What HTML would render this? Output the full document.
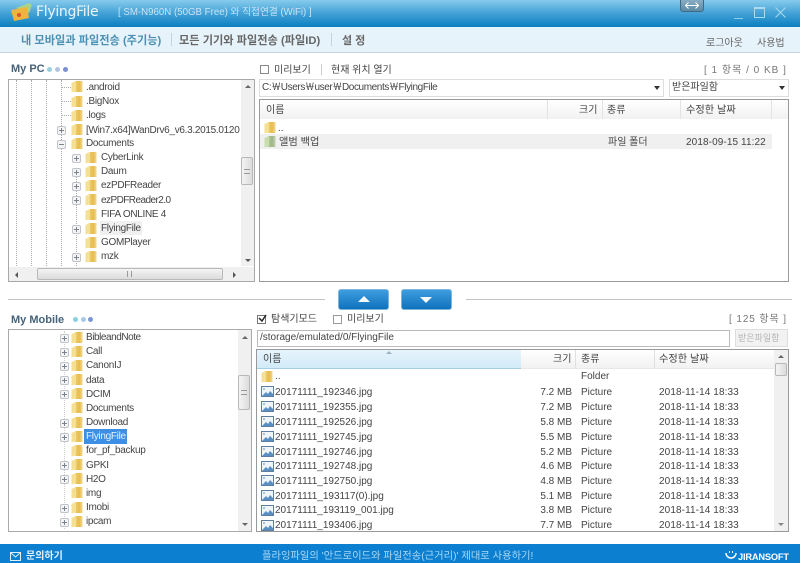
<!DOCTYPE html>
<html lang="ko"><head><meta charset="utf-8"><title>FlyingFile</title>
<style>
html,body{margin:0;padding:0;background:#fff}
#p{position:relative;width:800px;height:563px;overflow:hidden;background:#fff;font-family:"Liberation Sans","Noto Sans CJK KR",sans-serif;font-size:10px;color:#444;filter:blur(.3px)}
#p div,#p span,#p svg{position:absolute}
#p span{white-space:nowrap;line-height:14px;margin-top:1px}
.b{border:1px solid #a9a9a9;box-sizing:border-box;background:#fff}
.sb{background:#f0f0f0}
.th{border:1px solid #b8b8b8;box-sizing:border-box;border-radius:2px;background:linear-gradient(90deg,#f4f4f4,#dcdcdc)}
.d{width:5px;height:5px;border-radius:50%}
.arr{width:0;height:0}
.r{text-align:right}
#p span.t{letter-spacing:-.3px}
</style></head><body>
<div id="p">
<svg width="0" height="0" style="left:0;top:0"><defs>
<linearGradient id="fg" x1="0" x2="1" y1="0" y2="0"><stop offset="0" stop-color="#f0cf6c"/><stop offset=".55" stop-color="#e6bb52"/><stop offset="1" stop-color="#f3d98c"/></linearGradient>
<linearGradient id="gg" x1="0" x2="1" y1="0" y2="0"><stop offset="0" stop-color="#b4cc98"/><stop offset=".55" stop-color="#9fb587"/><stop offset="1" stop-color="#c4d2b0"/></linearGradient>
<symbol id="f" viewBox="0 0 12 13"><path d="M4 1h7.500v11H4z" fill="url(#fg)"/><path d="M.5 3L5 1v10l-4.500 1.500z" fill="#f5df92"/></symbol>
<symbol id="g" viewBox="0 0 12 13"><path d="M4 1h7.500v11H4z" fill="url(#gg)"/><path d="M.5 3L5 1v10l-4.500 1.500z" fill="#c8dcae"/></symbol>
<symbol id="pic" viewBox="0 0 13 11"><rect x=".5" y=".5" width="12" height="10" fill="#f0f5fa" stroke="#5f7da0"/><path d="M1 10l4-4 2 2 2-3 3 3v2z" fill="#5a8fc4"/><rect x="2" y="2" width="2" height="2" fill="#a8c4de"/></symbol>
<symbol id="plus" viewBox="0 0 9 9"><rect x=".5" y=".5" width="8" height="8" rx="1.500" fill="#f4f4f4" stroke="#c0c4c8"/><path d="M2 4.500h5M4.500 2v5" stroke="#7a848e"/></symbol>
<symbol id="minus" viewBox="0 0 9 9"><rect x=".5" y=".5" width="8" height="8" rx="1.500" fill="#f4f4f4" stroke="#c0c4c8"/><path d="M2 4.500h5" stroke="#7a848e"/></symbol>
</defs></svg>

<!-- Title bar -->
<div style="left:0;top:0;width:800px;height:27px;background:linear-gradient(#86cbec,#49a5d8 45%,#1384c4 92%,#0f7db9)"></div>
<svg style="left:10px;top:2px" width="23" height="20" viewBox="0 0 23 20"><path d="M6 6L19 1l3 2-3 8z" fill="#a8d48a"/><path d="M1 8l16-3 2 11-15 3z" fill="#eeb53e"/><circle cx="9" cy="13" r="2" fill="#d9552a"/></svg>
<span style="left:36px;top:3px;font-size:14px;color:#e9f6fc;line-height:17px;font-family:'DejaVu Sans','Liberation Sans',sans-serif;letter-spacing:-.3px">FlyingFile</span>
<span style="left:118px;top:5px;font-size:9.700px;color:#c6e5f4">[ SM-N960N (50GB Free) 와 직접연결 (WiFi) ]</span>
<div style="left:680px;top:-3px;width:24px;height:15px;background:linear-gradient(#8fb3c8,#5d8aa5);border:1px solid #3e6a85;border-radius:3px;box-sizing:border-box"></div>
<svg style="left:685px;top:2px" width="14" height="7"><path d="M.5 3.500h13M3.500 .5l-3 3 3 3M10.500 .5l3 3-3 3" stroke="#fff" fill="none"/></svg>
<div style="left:734px;top:18px;width:9px;height:1px;background:#8fcdea"></div>
<div style="left:754px;top:7px;width:11px;height:11px;border:1px solid #a8dcf2;border-top-width:2px;box-sizing:border-box"></div>
<svg style="left:775px;top:7px" width="11" height="11"><path d="M.5.5l10 10M10.500.5l-10 10" stroke="#a8dcf2" stroke-width="1"/></svg>

<!-- Nav -->
<div style="left:0;top:27px;width:800px;height:25px;background:#e7f3fa;border-bottom:1px solid #c4d3dc"></div>
<span style="left:21px;top:33px;font-size:11.200px;font-weight:bold;color:#4a90b4">내 모바일과 파일전송 (주기능)</span>
<div style="left:171px;top:33px;width:1px;height:13px;background:#c5d3db"></div>
<span style="left:179px;top:33px;font-size:11.200px;font-weight:bold;color:#666">모든 기기와 파일전송 (파일ID)</span>
<div style="left:331px;top:33px;width:1px;height:13px;background:#c5d3db"></div>
<span style="left:342px;top:33px;font-size:11px;font-weight:bold;color:#666">설 정</span>
<span style="left:706px;top:36px;color:#666">로그아웃</span>
<span style="left:757px;top:36px;color:#666">사용법</span>

<!-- My PC -->
<span style="left:11px;top:61px;font-size:11px;font-weight:bold;color:#45637a">My PC</span>
<div class="d" style="left:47px;top:67px;background:#9bd0dd"></div><div class="d" style="left:55px;top:67px;background:#b4c4e0"></div><div class="d" style="left:63px;top:67px;background:#7c8fd0"></div>

<div class="b" style="left:8px;top:79px;width:247px;height:203px;overflow:hidden"></div>
<div style="left:16px;top:80px;width:1px;height:186px;border-left:1px dotted #aaa"></div>
<div style="left:31px;top:80px;width:1px;height:186px;border-left:1px dotted #aaa"></div>
<div style="left:46px;top:80px;width:1px;height:186px;border-left:1px dotted #aaa"></div>
<div style="left:61px;top:80px;width:1px;height:186px;border-left:1px dotted #aaa"></div>
<div style="left:76px;top:172px;width:1px;height:94px;border-left:1px dotted #aaa"></div>
<div style="left:62px;top:87px;width:9px;border-top:1px dotted #aaa"></div>
<div style="left:62px;top:101px;width:9px;border-top:1px dotted #aaa"></div>
<div style="left:62px;top:115px;width:9px;border-top:1px dotted #aaa"></div>
<svg style="left:71px;top:80px" width="12" height="13"><use href="#f"/></svg><span class="t" style="left:86px;top:80px">.android</span>
<svg style="left:71px;top:95px" width="12" height="13"><use href="#f"/></svg><span class="t" style="left:86px;top:94px">.BigNox</span>
<svg style="left:71px;top:109px" width="12" height="13"><use href="#f"/></svg><span class="t" style="left:86px;top:108px">.logs</span>
<svg style="left:57px;top:126px" width="9" height="9"><use href="#plus"/></svg><svg style="left:71px;top:123px" width="12" height="13"><use href="#f"/></svg><span class="t" style="left:86px;top:123px;width:155px;overflow:hidden">[Win7.x64]WanDrv6_v6.3.2015.0120</span>
<svg style="left:57px;top:140px" width="9" height="9"><use href="#minus"/></svg><svg style="left:71px;top:137px" width="12" height="13"><use href="#f"/></svg><span class="t" style="left:86px;top:136px">Documents</span>
<svg style="left:72px;top:154px" width="9" height="9"><use href="#plus"/></svg><svg style="left:85px;top:151px" width="12" height="13"><use href="#f"/></svg><span class="t" style="left:101px;top:150px">CyberLink</span>
<svg style="left:72px;top:168px" width="9" height="9"><use href="#plus"/></svg><svg style="left:85px;top:165px" width="12" height="13"><use href="#f"/></svg><span class="t" style="left:101px;top:164px">Daum</span>
<svg style="left:72px;top:182px" width="9" height="9"><use href="#plus"/></svg><svg style="left:85px;top:179px" width="12" height="13"><use href="#f"/></svg><span class="t" style="left:101px;top:178px">ezPDFReader</span>
<svg style="left:72px;top:196px" width="9" height="9"><use href="#plus"/></svg><svg style="left:85px;top:193px" width="12" height="13"><use href="#f"/></svg><span class="t" style="left:101px;top:193px;letter-spacing:-.55px">ezPDFReader2.0</span>
<svg style="left:85px;top:208px" width="12" height="13"><use href="#f"/></svg><span class="t" style="left:101px;top:207px">FIFA ONLINE 4</span>
<div style="left:100px;top:221px;width:42px;height:14px;background:#f0f0f0"></div>
<svg style="left:72px;top:225px" width="9" height="9"><use href="#plus"/></svg><svg style="left:85px;top:222px" width="12" height="13"><use href="#f"/></svg><span class="t" style="left:101px;top:221px">FlyingFile</span>
<svg style="left:85px;top:236px" width="12" height="13"><use href="#f"/></svg><span class="t" style="left:101px;top:235px">GOMPlayer</span>
<svg style="left:72px;top:253px" width="9" height="9"><use href="#plus"/></svg><svg style="left:85px;top:250px" width="12" height="13"><use href="#f"/></svg><span class="t" style="left:101px;top:249px">mzk</span>
<div class="sb" style="left:241px;top:80px;width:13px;height:186px"></div>
<div class="th" style="left:241px;top:157px;width:12px;height:28px"></div>
<div style="left:244px;top:169px;width:6px;height:5px;border-top:1px solid #999;border-bottom:1px solid #999;box-sizing:border-box"></div>
<div class="arr" style="left:245px;top:85px;border:3px solid transparent;border-bottom-color:#666;border-top:0"></div>
<div class="arr" style="left:245px;top:259px;border:3px solid transparent;border-top-color:#555;border-bottom:0"></div>
<div class="sb" style="left:9px;top:267px;width:245px;height:14px"></div>
<div class="th" style="left:37px;top:268px;width:186px;height:12px;background:linear-gradient(#f4f4f4,#dcdcdc)"></div>
<div style="left:127px;top:271px;width:5px;height:6px;border-left:1px solid #999;border-right:1px solid #999;box-sizing:border-box"></div>
<div class="arr" style="left:15px;top:272px;border:3px solid transparent;border-right-color:#555;border-left:0"></div>
<div class="arr" style="left:233px;top:272px;border:3px solid transparent;border-left-color:#555;border-right:0"></div>

<!-- PC right -->
<div class="b" style="left:260px;top:65px;width:9px;height:9px;border-color:#888"></div>
<span style="left:274px;top:63px">미리보기</span>
<div style="left:321px;top:64px;width:1px;height:11px;background:#ccc"></div>
<span style="left:331px;top:63px">현재 위치 열기</span>
<span style="left:704px;top:63px;color:#777;letter-spacing:1px">[ 1 항목 / 0 KB ]</span>
<div class="b" style="left:259px;top:79px;width:405px;height:18px;border-color:#ddd"></div>
<span style="left:262px;top:80px;letter-spacing:-.4px">C:￦Users￦user￦Documents￦FlyingFile</span>
<div class="arr" style="left:654px;top:86px;border:3px solid transparent;border-top:4px solid #333;border-bottom:0"></div>
<div class="b" style="left:669px;top:79px;width:120px;height:18px;border-color:#ddd"></div>
<span style="left:672px;top:80px">받은파일함</span>
<div class="arr" style="left:779px;top:86px;border:3px solid transparent;border-top:4px solid #333;border-bottom:0"></div>

<div class="b" style="left:259px;top:99px;width:530px;height:183px;border-color:#999"></div>
<div style="left:260px;top:100px;width:528px;height:19px;background:linear-gradient(#fff,#f1f1f1)"></div>
<div style="left:547px;top:100px;width:1px;height:19px;background:#e3e3e3"></div>
<div style="left:602px;top:100px;width:1px;height:19px;background:#e3e3e3"></div>
<div style="left:680px;top:100px;width:1px;height:19px;background:#e3e3e3"></div>
<div style="left:771px;top:100px;width:1px;height:19px;background:#e3e3e3"></div>
<span style="left:266px;top:103px">이름</span>
<span style="left:579px;top:103px">크기</span>
<span style="left:607px;top:103px">종류</span>
<span style="left:686px;top:103px;font-size:10.200px">수정한 날짜</span>
<svg style="left:264px;top:121px" width="12" height="13"><use href="#f"/></svg><span style="left:278px;top:121px">..</span>
<div style="left:260px;top:134px;width:512px;height:15px;background:#f0f0f0"></div>
<svg style="left:264px;top:135px" width="12" height="13"><use href="#g"/></svg>
<span style="left:279px;top:135px;font-size:10.200px">앨범 백업</span>
<span style="left:608px;top:135px">파일 폴더</span>
<span style="left:686px;top:135px;letter-spacing:.1px">2018-09-15 11:22</span>

<!-- Divider -->
<div style="left:8px;top:299px;width:317px;height:1px;background:#c4c4c4"></div>
<div style="left:466px;top:299px;width:326px;height:1px;background:#c4c4c4"></div>
<div style="left:338px;top:289px;width:51px;height:21px;border-radius:3px;background:linear-gradient(#3f9ddf,#0f72bd);border:1px solid #7db5db;box-sizing:border-box"></div>
<div class="arr" style="left:358px;top:296px;border-left:6px solid transparent;border-right:6px solid transparent;border-bottom:6px solid #f4f9fc"></div>
<div style="left:401px;top:289px;width:51px;height:21px;border-radius:3px;background:linear-gradient(#3f9ddf,#0f72bd);border:1px solid #7db5db;box-sizing:border-box"></div>
<div class="arr" style="left:420px;top:297px;border-left:6px solid transparent;border-right:6px solid transparent;border-top:6px solid #f4f9fc"></div>

<!-- My Mobile -->
<span style="left:11px;top:312px;font-size:11px;font-weight:bold;color:#45637a">My Mobile</span>
<div class="d" style="left:73px;top:317px;background:#88cfdf"></div><div class="d" style="left:81px;top:317px;background:#a9c8e6"></div><div class="d" style="left:88px;top:317px;background:#7c95d4"></div>
<div class="b" style="left:8px;top:329px;width:244px;height:203px;border-color:#aaa"></div>
<div style="left:64px;top:331px;width:1px;height:198px;border-left:1px dotted #ccc"></div>
<svg style="left:60px;top:334px" width="9" height="9"><use href="#plus"/></svg><svg style="left:71px;top:331px" width="12" height="13"><use href="#f"/></svg><span class="t" style="left:86px;top:330px;letter-spacing:-.45px">BibleandNote</span>
<svg style="left:60px;top:348px" width="9" height="9"><use href="#plus"/></svg><svg style="left:71px;top:345px" width="12" height="13"><use href="#f"/></svg><span class="t" style="left:86px;top:344px">Call</span>
<svg style="left:60px;top:362px" width="9" height="9"><use href="#plus"/></svg><svg style="left:71px;top:359px" width="12" height="13"><use href="#f"/></svg><span class="t" style="left:86px;top:358px">CanonIJ</span>
<svg style="left:60px;top:376px" width="9" height="9"><use href="#plus"/></svg><svg style="left:71px;top:373px" width="12" height="13"><use href="#f"/></svg><span class="t" style="left:86px;top:373px">data</span>
<svg style="left:60px;top:390px" width="9" height="9"><use href="#plus"/></svg><svg style="left:71px;top:387px" width="12" height="13"><use href="#f"/></svg><span class="t" style="left:86px;top:387px">DCIM</span>
<svg style="left:71px;top:401px" width="12" height="13"><use href="#f"/></svg><span class="t" style="left:86px;top:401px">Documents</span>
<svg style="left:60px;top:419px" width="9" height="9"><use href="#plus"/></svg><svg style="left:71px;top:416px" width="12" height="13"><use href="#f"/></svg><span class="t" style="left:86px;top:415px">Download</span>
<div style="left:84px;top:429px;width:43px;height:15px;background:#3d8fe6"></div>
<svg style="left:60px;top:433px" width="9" height="9"><use href="#plus"/></svg><svg style="left:71px;top:430px" width="12" height="13"><use href="#f"/></svg><span class="t" style="left:86px;top:429px;color:#e6f2ff">FlyingFile</span>
<svg style="left:71px;top:444px" width="12" height="13"><use href="#f"/></svg><span class="t" style="left:86px;top:443px">for_pf_backup</span>
<svg style="left:60px;top:461px" width="9" height="9"><use href="#plus"/></svg><svg style="left:71px;top:458px" width="12" height="13"><use href="#f"/></svg><span class="t" style="left:86px;top:458px">GPKI</span>
<svg style="left:60px;top:475px" width="9" height="9"><use href="#plus"/></svg><svg style="left:71px;top:472px" width="12" height="13"><use href="#f"/></svg><span class="t" style="left:86px;top:472px">H2O</span>
<svg style="left:71px;top:486px" width="12" height="13"><use href="#f"/></svg><span class="t" style="left:86px;top:486px">img</span>
<svg style="left:60px;top:504px" width="9" height="9"><use href="#plus"/></svg><svg style="left:71px;top:501px" width="12" height="13"><use href="#f"/></svg><span class="t" style="left:86px;top:500px">Imobi</span>
<svg style="left:60px;top:518px" width="9" height="9"><use href="#plus"/></svg><svg style="left:71px;top:515px" width="12" height="13"><use href="#f"/></svg><span class="t" style="left:86px;top:514px">ipcam</span>
<div class="sb" style="left:238px;top:330px;width:13px;height:201px"></div>
<div class="th" style="left:238px;top:375px;width:12px;height:35px"></div>
<div style="left:241px;top:390px;width:6px;height:5px;border-top:1px solid #999;border-bottom:1px solid #999;box-sizing:border-box"></div>
<div class="arr" style="left:242px;top:336px;border:3px solid transparent;border-bottom-color:#666;border-top:0"></div>
<div class="arr" style="left:242px;top:523px;border:3px solid transparent;border-top-color:#666;border-bottom:0"></div>

<!-- Mobile right -->
<div class="b" style="left:257px;top:315px;width:9px;height:9px;border-color:#777"></div>
<svg style="left:257px;top:314px" width="11" height="10"><path d="M2 4l3 3 4-6" stroke="#222" stroke-width="1.500" fill="none"/></svg>
<span style="left:271px;top:312px">탐색기모드</span>
<div class="b" style="left:333px;top:315px;width:9px;height:9px;border-color:#999"></div>
<span style="left:347px;top:312px">미리보기</span>
<span style="left:729px;top:312px;color:#777;letter-spacing:.9px">[ 125 항목 ]</span>
<div class="b" style="left:257px;top:330px;width:473px;height:17px;border-color:#bbb"></div>
<span style="left:260px;top:330px">/storage/emulated/0/FlyingFile</span>
<div class="b" style="left:735px;top:329px;width:53px;height:18px;border-color:#ddd;background:#f2f2f2"></div>
<span style="left:738px;top:330px;font-size:9px;color:#b4b4b4">받은파일함</span>

<div class="b" style="left:256px;top:349px;width:533px;height:183px;border-color:#999"></div>
<div style="left:257px;top:350px;width:264px;height:19px;background:linear-gradient(#e6f4fc,#d2ebf8);border-bottom:1px solid #a5cde3;box-sizing:border-box"></div>
<div style="left:521px;top:350px;width:253px;height:19px;background:linear-gradient(#fff,#f1f1f1);border-bottom:1px solid #e8e8e8;box-sizing:border-box"></div>
<div style="left:575px;top:350px;width:1px;height:19px;background:#e0e0e0"></div>
<div style="left:654px;top:350px;width:1px;height:19px;background:#e0e0e0"></div>
<div class="arr" style="left:386px;top:351px;border:3px solid transparent;border-bottom-color:#9cb4c4;border-top:0"></div>
<span style="left:263px;top:352px">이름</span>
<span style="left:553px;top:352px">크기</span>
<span style="left:581px;top:352px">종류</span>
<span style="left:659px;top:352px;font-size:10.200px">수정한 날짜</span>
<svg style="left:261px;top:370px" width="12" height="13"><use href="#f"/></svg><span style="left:275px;top:369px">..</span><span style="left:581px;top:369px">Folder</span>

<svg style="left:261px;top:386px" width="13" height="11"><use href="#pic"/></svg><span style="left:275px;top:385px">20171111_192346.jpg</span><span class="r" style="left:531px;top:385px;width:41px">7.2 MB</span><span style="left:581px;top:385px">Picture</span><span style="left:659px;top:385px;letter-spacing:.1px">2018-11-14 18:33</span>
<svg style="left:261px;top:401px" width="13" height="11"><use href="#pic"/></svg><span style="left:275px;top:400px">20171111_192355.jpg</span><span class="r" style="left:531px;top:400px;width:41px">7.2 MB</span><span style="left:581px;top:400px">Picture</span><span style="left:659px;top:400px;letter-spacing:.1px">2018-11-14 18:33</span>
<svg style="left:261px;top:416px" width="13" height="11"><use href="#pic"/></svg><span style="left:275px;top:415px">20171111_192526.jpg</span><span class="r" style="left:531px;top:415px;width:41px">5.8 MB</span><span style="left:581px;top:415px">Picture</span><span style="left:659px;top:415px;letter-spacing:.1px">2018-11-14 18:33</span>
<svg style="left:261px;top:431px" width="13" height="11"><use href="#pic"/></svg><span style="left:275px;top:430px">20171111_192745.jpg</span><span class="r" style="left:531px;top:430px;width:41px">5.5 MB</span><span style="left:581px;top:430px">Picture</span><span style="left:659px;top:430px;letter-spacing:.1px">2018-11-14 18:33</span>
<svg style="left:261px;top:446px" width="13" height="11"><use href="#pic"/></svg><span style="left:275px;top:445px">20171111_192746.jpg</span><span class="r" style="left:531px;top:445px;width:41px">5.2 MB</span><span style="left:581px;top:445px">Picture</span><span style="left:659px;top:445px;letter-spacing:.1px">2018-11-14 18:33</span>
<svg style="left:261px;top:461px" width="13" height="11"><use href="#pic"/></svg><span style="left:275px;top:459px">20171111_192748.jpg</span><span class="r" style="left:531px;top:459px;width:41px">4.6 MB</span><span style="left:581px;top:459px">Picture</span><span style="left:659px;top:459px;letter-spacing:.1px">2018-11-14 18:33</span>
<svg style="left:261px;top:475px" width="13" height="11"><use href="#pic"/></svg><span style="left:275px;top:474px">20171111_192750.jpg</span><span class="r" style="left:531px;top:474px;width:41px">4.8 MB</span><span style="left:581px;top:474px">Picture</span><span style="left:659px;top:474px;letter-spacing:.1px">2018-11-14 18:33</span>
<svg style="left:261px;top:490px" width="13" height="11"><use href="#pic"/></svg><span style="left:275px;top:489px">20171111_193117(0).jpg</span><span class="r" style="left:531px;top:489px;width:41px">5.1 MB</span><span style="left:581px;top:489px">Picture</span><span style="left:659px;top:489px;letter-spacing:.1px">2018-11-14 18:33</span>
<svg style="left:261px;top:505px" width="13" height="11"><use href="#pic"/></svg><span style="left:275px;top:503px">20171111_193119_001.jpg</span><span class="r" style="left:531px;top:503px;width:41px">3.8 MB</span><span style="left:581px;top:503px">Picture</span><span style="left:659px;top:503px;letter-spacing:.1px">2018-11-14 18:33</span>
<svg style="left:261px;top:520px" width="13" height="11"><use href="#pic"/></svg><span style="left:275px;top:518px">20171111_193406.jpg</span><span class="r" style="left:531px;top:518px;width:41px">7.7 MB</span><span style="left:581px;top:518px">Picture</span><span style="left:659px;top:518px;letter-spacing:.1px">2018-11-14 18:33</span>
<div style="left:257px;top:531px;width:531px;height:2px;background:#fff;border-top:1px solid #999;box-sizing:border-box"></div>
<div class="sb" style="left:774px;top:350px;width:14px;height:181px"></div>
<div class="th" style="left:775px;top:363px;width:12px;height:13px"></div>
<div class="arr" style="left:778px;top:355px;border:3px solid transparent;border-bottom-color:#666;border-top:0"></div>
<div class="arr" style="left:778px;top:523px;border:3px solid transparent;border-top-color:#888;border-bottom:0"></div>

<!-- Footer -->
<div style="left:0;top:544px;width:800px;height:19px;background:#0c7fd0"></div>
<svg style="left:10px;top:552px" width="11" height="9"><rect x=".5" y=".5" width="10" height="8" fill="none" stroke="#dff0fb"/><path d="M1 1l4.500 4L10 1" stroke="#dff0fb" fill="none"/></svg>
<span style="left:26px;top:549px;font-weight:bold;color:#e3f2fc">문의하기</span>
<span style="left:262px;top:549px;font-size:10.300px;color:#a8d8f6">플라잉파일의 '안드로이드와 파일전송(근거리)' 제대로 사용하기!</span>
<svg style="left:725px;top:550px" width="12" height="10"><path d="M1 3a5 5 0 0 0 10 0" stroke="#fff" stroke-width="1.500" fill="none"/><path d="M4.500 1v2M7.500 1v2" stroke="#fff"/></svg>
<span style="left:738px;top:549px;font-size:9.300px;font-weight:bold;color:#fff;letter-spacing:-.2px">JIRANSOFT</span>
</div>
</body></html>
